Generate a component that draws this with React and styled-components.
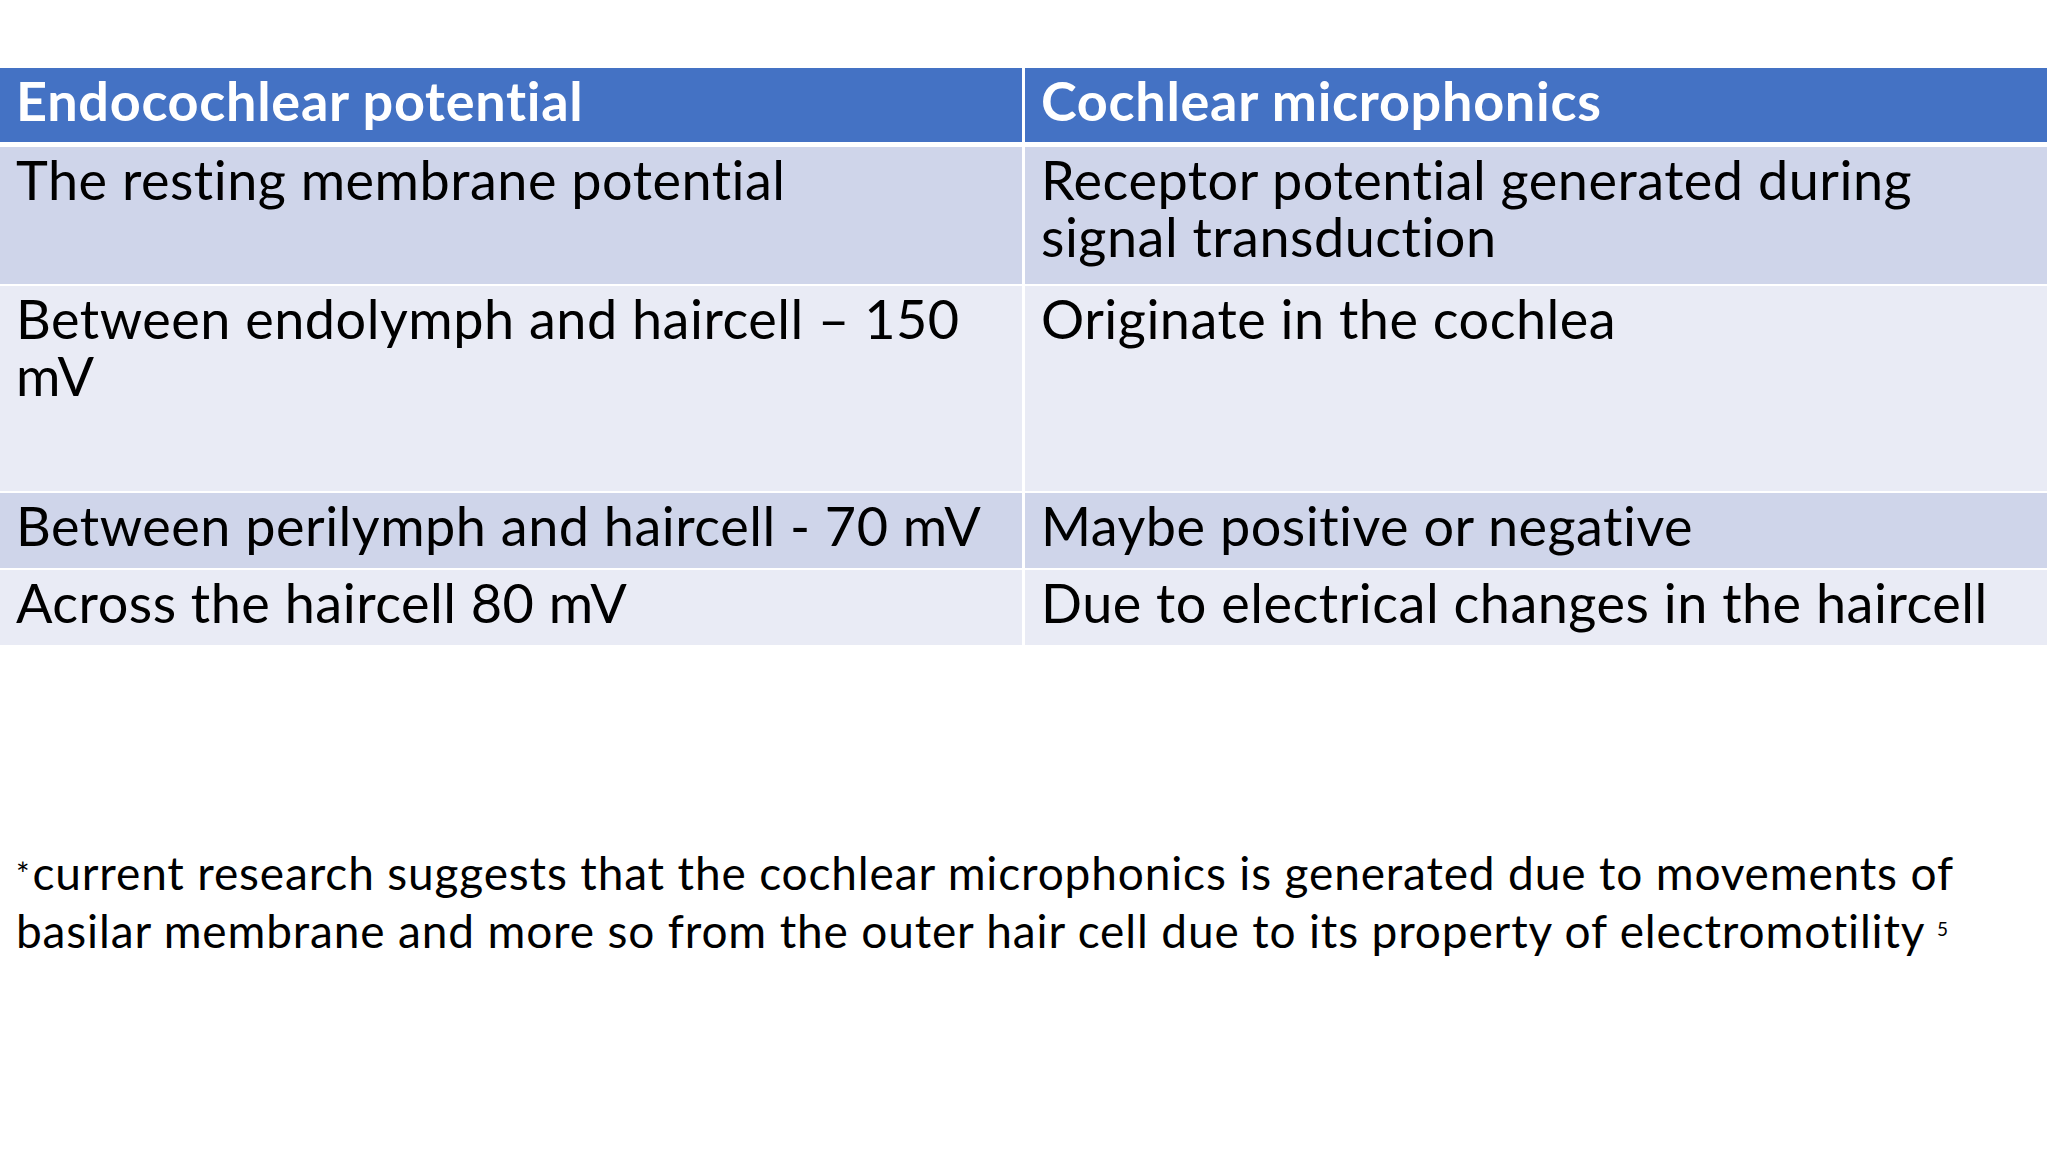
import React from "react";
import styled, { createGlobalStyle } from "styled-components";

const rows = [
  {
    left: "The resting membrane potential",
    right: "Receptor potential generated during signal transduction",
    height: 137,
    shade: "dark",
  },
  {
    left: "Between endolymph and haircell \u2013 150 mV",
    right: "Originate in the cochlea",
    height: 205,
    shade: "light",
  },
  {
    left: "Between perilymph and haircell - 70 mV",
    right: "Maybe positive or negative",
    height: 75,
    shade: "dark",
  },
  {
    left: "Across the haircell 80 mV",
    right: "Due to electrical changes in the haircell",
    height: 75,
    shade: "light",
  },
];

const App = () => {
  return (
    <>
      <GlobalStyle />
      <Slide>
        <Table>
          <Row height={74}>
            <HeadCell>Endocochlear potential</HeadCell>
            <HeadCell>Cochlear microphonics</HeadCell>
          </Row>
          {rows.map((row, index) => (
            <Row key={index} height={row.height} first={index === 0}>
              <Cell shade={row.shade}>{row.left}</Cell>
              <Cell shade={row.shade}>{row.right}</Cell>
            </Row>
          ))}
        </Table>
        <Note>
          <Star>*</Star>current research suggests that the cochlear
          microphonics is generated due to movements of basilar membrane and
          more so from the outer hair cell due to its property of
          electromotility <Ref>5</Ref>
        </Note>
      </Slide>
    </>
  );
};

export default App;

const GlobalStyle = createGlobalStyle`
  html, body {
    margin: 0;
    padding: 0;
    background: #ffffff;
  }
  body {
    font-family: Lato, "Liberation Sans", sans-serif;
  }
`;

const Slide = styled.div`
  width: 2048px;
  height: 1152px;
  overflow: hidden;
  background: #ffffff;
  padding-top: 68px;
  box-sizing: border-box;
`;

const Table = styled.div`
  width: 2047px;
  display: flex;
  flex-direction: column;
  gap: 2px;
`;

const Row = styled.div`
  display: grid;
  grid-template-columns: 1022px 1022px;
  column-gap: 3px;
  height: ${(props) => props.height}px;
  margin-top: ${(props) => (props.first ? "3px" : "0")};
`;

const HeadCell = styled.div`
  background: #4472c4;
  color: #ffffff;
  font-weight: 700;
  font-size: 54px;
  letter-spacing: 0.7px;
  line-height: 56px;
  padding: 5px 16px 0;
`;

const Cell = styled.div`
  background: ${(props) => (props.shade === "dark" ? "#cfd5ea" : "#e9ebf5")};
  color: #000000;
  font-size: 54px;
  letter-spacing: 0.5px;
  line-height: 57px;
  padding: 4px 16px 0;
`;

const Note = styled.div`
  margin-top: 199px;
  padding: 0 16px;
  width: 2000px;
  box-sizing: border-box;
  font-size: 46px;
  letter-spacing: 0.85px;
  line-height: 58px;
  color: #000000;
`;

const Star = styled.span`
  font-size: 32px;
  line-height: 1;
  vertical-align: 4px;
  margin-right: 2px;
`;

const Ref = styled.span`
  font-size: 19px;
  line-height: 1;
  vertical-align: 12px;
  letter-spacing: 0;
`;
